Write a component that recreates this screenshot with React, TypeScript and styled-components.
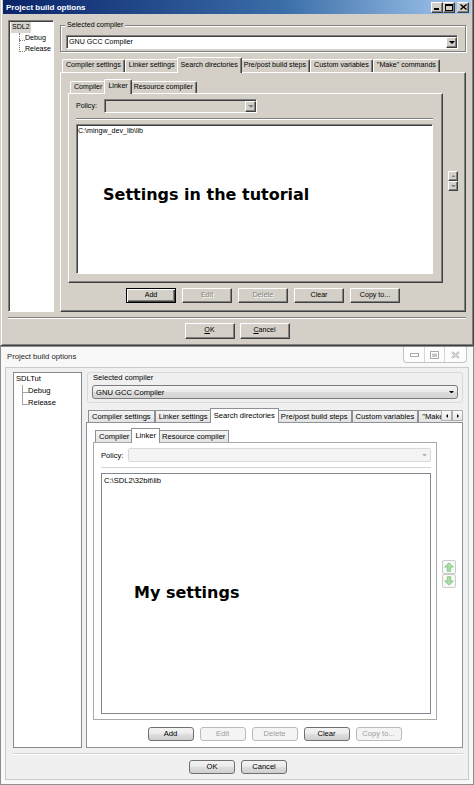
import styled, { createGlobalStyle, css, ThemeProvider } from "styled-components"
import type { DefaultTheme } from "styled-components"

declare module "styled-components" {
  export interface DefaultTheme {
    aero: boolean
  }
}

type Themed = { theme: DefaultTheme }

// picks the Win7 value or the classic one from the theme
const pick =
  <T,>(aero: T, classic: T) =>
  ({ theme }: Themed) =>
    theme.aero ? aero : classic

const raised = css`
  border: 1px solid;
  border-color: #ffffff #404040 #404040 #ffffff;
  box-shadow: inset -1px -1px #808080;
`

const sunken = css`
  border: 1px solid;
  border-color: #808080 #ffffff #ffffff #808080;
  box-shadow: inset 1px 1px #404040;
`

const GlobalStyle = createGlobalStyle`
  * {
    box-sizing: border-box;
  }
  html, body {
    margin: 0;
    padding: 0;
    background: #ffffff;
  }
  body {
    width: 474px;
    font-family: "Liberation Sans", Arial, sans-serif;
    color: #000000;
  }
`

const Dialog = styled.section`
  display: flex;
  flex-direction: column;
  ${pick(
    css`
      height: 439px;
      padding: 0 4px 4px;
      font-size: 7.6px;
      background: #f8f8f8;
      border: 1px solid #8d8d8d;
    `,
    css`
      height: 346px;
      padding: 0 2px 2px;
      font-size: 7.1px;
      background: #d4d0c8;
      border: 1px solid;
      border-color: #d4d0c8 #404040 #404040 #d4d0c8;
      border-top: 0;
      box-shadow: inset 1px 0 #ffffff, inset -1px -1px #808080;
    `
  )}
`

const Caption = styled.header`
  flex: none;
  display: flex;
  justify-content: space-between;
  ${pick(
    css`
      height: 20px;
      padding-left: 2px;
    `,
    css`
      height: 14px;
      align-items: center;
      padding: 0 2px 0 3px;
      background: linear-gradient(90deg, #0a246a, #3b6ea8 60%, #a6caf0);
    `
  )}
`

const CaptionText = styled.span`
  ${pick(
    css`
      font-size: 7.7px;
      line-height: 20px;
      color: #1e1e1e;
    `,
    css`
      font-size: 8px;
      font-weight: bold;
      color: #ffffff;
    `
  )}
`

const WindowControls = styled.div`
  display: flex;
  ${pick(
    css`
      height: 16px;
      margin-right: 2px;
      border: 1px solid #c4c4c4;
      border-top: 0;
      border-radius: 0 0 4px 4px;
      background: #fdfdfd;
    `,
    css`
      align-items: center;
    `
  )}
`

const WindowButton = styled.span<{ $wide?: boolean }>`
  display: flex;
  align-items: center;
  justify-content: center;
  ${({ theme, $wide }) =>
    theme.aero
      ? css`
          width: ${$wide ? 22 : 20}px;
          & + & {
            border-left: 1px solid #d6d6d6;
          }
        `
      : css`
          width: 12px;
          height: 11px;
          margin-left: ${$wide ? 2 : 0}px;
          background: #d4d0c8;
          ${raised}
        `}
`

const Body = styled.div`
  flex: 1;
  display: flex;
  flex-direction: column;
  ${pick(
    css`
      padding: 4px 5px 0 7px;
      background: #f0f0f0;
      border: 1px solid #cacaca;
    `,
    css`
      padding: 6px 5px 0 5px;
    `
  )}
`

const MainRow = styled.div`
  flex: none;
  display: flex;
  gap: ${pick(4, 6)}px;
  height: ${pick(376, 292)}px;
`

const Tree = styled.ul`
  flex: none;
  margin: 0;
  list-style: none;
  background: #ffffff;
  ${pick(
    css`
      width: 69px;
      padding: 0 0 0 1px;
      border: 1px solid #828790;
      line-height: 12px;
    `,
    css`
      width: 46px;
      padding: 1px 0 0 2px;
      ${sunken};
      line-height: 11px;
    `
  )}
`

const TreeNode = styled.li<{ $child?: boolean; $first?: boolean; $selected?: boolean }>`
  position: relative;
  width: fit-content;
  padding: 0 1px;
  white-space: nowrap;
  ${({ $selected }) =>
    $selected &&
    css`
      background: #d8d5cf;
    `}
  ${({ theme, $child, $first }) => {
    if (!$child) return ""
    const line = theme.aero ? "1px solid #a4a4a4" : "1px dotted #808080"
    const step = theme.aero ? 12 : 11
    return css`
      margin-left: ${theme.aero ? 12 : 13}px;
      &::before {
        content: "";
        position: absolute;
        left: -5px;
        top: ${$first ? 0 : -(step / 2)}px;
        width: 5px;
        height: ${$first ? Math.ceil(step / 2) + 1 : step + 1}px;
        border-left: ${line};
        border-bottom: ${line};
      }
    `
  }}
`

const RightCol = styled.div`
  flex: 1;
  min-width: 0;
  display: flex;
  flex-direction: column;
`

const GroupBox = styled.div`
  flex: none;
  ${pick(
    css`
      margin-left: 1px;
      padding: 0 4px 3px 4px;
      border: 1px solid #dadada;
      border-radius: 3px;
    `,
    css`
      margin-top: 5px;
      padding: 0 7px 2px 5px;
      border: 1px solid #808080;
      box-shadow: inset 1px 1px #ffffff, 1px 1px #ffffff;
    `
  )}
`

const GroupLabel = styled.span`
  display: block;
  width: fit-content;
  line-height: 10px;
  ${pick(
    css`
      padding-left: 1px;
    `,
    css`
      margin: -6px 0 0 -1px;
      padding: 0 2px;
      background: #d4d0c8;
    `
  )}
`

const Combo = styled.div<{ $disabled?: boolean; $width?: number; $grow?: boolean; $top?: number }>`
  display: flex;
  align-items: center;
  height: 14px;
  margin-top: ${({ $top }) => $top ?? 0}px;
  white-space: nowrap;
  ${({ $width }) =>
    $width &&
    css`
      flex: none;
      width: ${$width}px;
    `}
  ${({ $grow }) =>
    $grow &&
    css`
      flex: 1;
    `}
  ${({ theme, $disabled }) =>
    theme.aero
      ? $disabled
        ? css`
            border: 1px solid #d9d9d9;
            border-radius: 2px;
            background: #f4f4f4;
          `
        : css`
            padding-left: 3px;
            border: 1px solid #7a7a7a;
            border-radius: 3px;
            background: linear-gradient(#f5f5f5, #e9e9e9 50%, #dcdcdc 52%, #d3d3d3);
          `
      : css`
          padding-left: 2px;
          ${sunken};
          background: ${$disabled ? "#d4d0c8" : "#ffffff"};
        `}
`

const ComboText = styled.span`
  flex: 1;
  overflow: hidden;
`

const ComboArrow = styled.span`
  flex: none;
  display: flex;
  align-items: center;
  justify-content: center;
  ${pick(
    css`
      width: 11px;
      height: 100%;
    `,
    css`
      align-self: stretch;
      width: 11px;
      margin-top: 1px;
      background: #d4d0c8;
      ${raised}
    `
  )}
`

const TabStrip = styled.div<{ $inner?: boolean }>`
  position: relative;
  z-index: 1;
  flex: none;
  display: flex;
  align-items: flex-end;
  height: ${({ theme, $inner }) => (theme.aero || $inner ? 15 : 16)}px;
  margin-top: ${({ $inner }) => ($inner ? 0 : 5)}px;
  margin-bottom: -1px;
`

const TabList = styled.div`
  flex: 1;
  display: flex;
  align-items: flex-end;
  height: 100%;
  padding-left: 2px;
  overflow: hidden;
`

const Tab = styled.span<{ $active?: boolean; $inner?: boolean }>`
  position: relative;
  flex: none;
  display: flex;
  align-items: center;
  padding: 0 3px;
  white-space: nowrap;
  line-height: 1;
  ${({ theme, $active, $inner }) => {
    const full = theme.aero || $inner ? 15 : 16
    const rest = theme.aero || $inner ? 12 : 13
    return css`
      height: ${$active ? full : rest}px;
      margin: 0 ${$active ? -2 : 0}px ${$active ? 0 : 1}px;
      z-index: ${$active ? 1 : 0};
    `
  }}
  ${({ theme, $active }) =>
    theme.aero
      ? css`
          border: 1px solid #8e9097;
          border-bottom: 0;
          background: ${$active ? "#ffffff" : "linear-gradient(#f5f5f5, #e2e2e2)"};
        `
      : css`
          border: 1px solid;
          border-color: #ffffff #404040 transparent #ffffff;
          border-bottom: 0;
          border-radius: 2px 2px 0 0;
          background: #d4d0c8;
          box-shadow: inset -1px 0 #808080;
        `}
`

const TabScroll = styled.div`
  flex: none;
  display: flex;
  align-self: flex-end;
  margin-bottom: 2px;
`

const ScrollArrow = styled.span`
  display: flex;
  align-items: center;
  justify-content: center;
  width: 11px;
  height: 11px;
  border: 1px solid #adadad;
  background: linear-gradient(#fbfbfb, #e6e6e6);
`

const TabPanel = styled.div`
  flex: 1;
  min-height: 0;
  display: flex;
  flex-direction: column;
  ${pick(
    css`
      padding: 5px 6px 6px;
      background: #ffffff;
      border: 1px solid #8e9097;
    `,
    css`
      padding: 6px 7px 8px 7px;
      ${raised}
    `
  )}
`

const PanelRow = styled.div`
  flex: 1;
  min-height: 0;
  display: flex;
  align-items: center;
  gap: 5px;
`

const PageColumn = styled.div`
  flex: 1;
  align-self: stretch;
  display: flex;
  flex-direction: column;
`

const InnerPanel = styled.div`
  flex: 1;
  min-height: 0;
  display: flex;
  flex-direction: column;
  ${pick(
    css`
      padding: 5px 5px 5px 7px;
      background: #ffffff;
      border: 1px solid #a9a9a9;
    `,
    css`
      padding: 5px 9px 8px 7px;
      ${raised}
    `
  )}
`

const FieldRow = styled.div`
  flex: none;
  display: flex;
  align-items: center;
  height: 14px;
`

const FieldLabel = styled.span`
  flex: none;
  width: ${pick(27, 28)}px;
`

const Rule = styled.div<{ $gap: number }>`
  flex: none;
  height: 2px;
  margin-top: ${({ $gap }) => $gap}px;
  border-top: 1px solid ${pick("#d5d5d5", "#808080")};
  border-bottom: 1px solid #ffffff;
`

const ListBox = styled.div`
  flex: 1;
  min-height: 0;
  margin-top: 4px;
  background: #ffffff;
  white-space: nowrap;
  ${pick(
    css`
      padding: 1px 2px;
      border: 1px solid #828790;
      line-height: 11px;
    `,
    css`
      padding: 1px 0 0 1px;
      ${sunken};
      line-height: 10px;
    `
  )}
`

const Note = styled.div`
  font-family: "DejaVu Sans", Verdana, sans-serif;
  font-weight: bold;
  font-size: 16px;
  line-height: 16px;
  margin: ${pick("99px 0 0 30px", "51px 0 0 25px")};
`

const SpinColumn = styled.div`
  flex: none;
  display: flex;
  flex-direction: column;
`

const SpinButton = styled.span`
  display: flex;
  align-items: center;
  justify-content: center;
  ${pick(
    css`
      width: 14px;
      height: 14px;
      border: 1px solid #cbcbcb;
      border-radius: 2px;
      background: #f9f9f9;
    `,
    css`
      width: 10px;
      height: 10px;
      background: #d4d0c8;
      ${raised}
    `
  )}
`

const ButtonRow = styled.div<{ $gap: number; $top: number }>`
  flex: none;
  display: flex;
  justify-content: center;
  gap: ${({ $gap }) => $gap}px;
  margin-top: ${({ $top }) => $top}px;
`

const PushButton = styled.button<{ $default?: boolean; $tall?: boolean }>`
  flex: none;
  margin: 0;
  padding: 0;
  font: inherit;
  line-height: 1;
  ${({ theme, $default, $tall, disabled }) =>
    theme.aero
      ? css`
          width: 46px;
          height: 14px;
          border: 1px solid ${disabled ? "#b8bcbf" : "#707070"};
          border-radius: 3px;
          background: ${disabled ? "#f4f4f4" : "linear-gradient(#f3f3f3, #ebebeb 45%, #dddddd 55%, #cfcfcf)"};
          color: ${disabled ? "#9c9c9c" : "#000000"};
        `
      : css`
          width: 50px;
          height: ${$tall ? 16 : 15}px;
          background: #d4d0c8;
          color: ${disabled ? "#808080" : "#000000"};
          text-shadow: ${disabled ? "1px 1px #ffffff" : "none"};
          ${$default
            ? css`
                border: 1px solid #000000;
                box-shadow: inset 1px 1px #ffffff, inset -1px -1px #404040, inset -2px -2px #808080;
              `
            : raised}
        `}
`

type Dir = "up" | "down" | "left" | "right"

const Caret = ({ dir, color, size = 3 }: { dir: Dir; color: string; size?: number }) => {
  const flat = dir === "up" || dir === "down"
  const w = flat ? size * 2 : size
  const h = flat ? size : size * 2
  const points = {
    down: `0,0 ${w},0 ${w / 2},${h}`,
    up: `0,${h} ${w},${h} ${w / 2},0`,
    left: `${w},0 ${w},${h} 0,${h / 2}`,
    right: `0,0 0,${h} ${w},${h / 2}`,
  }[dir]
  return (
    <svg width={w} height={h} viewBox={`0 0 ${w} ${h}`}>
      <polygon points={points} fill={color} />
    </svg>
  )
}

const GreenArrow = ({ down }: { down?: boolean }) => (
  <svg width="10" height="10" viewBox="0 0 10 10">
    <polygon
      points="5,0.8 9.4,5 6.7,5 6.7,9.3 3.3,9.3 3.3,5 0.6,5"
      fill="#a9dca9"
      stroke="#7cc27c"
      strokeWidth="0.8"
      transform={down ? "rotate(180 5 5)" : undefined}
    />
  </svg>
)

const MinGlyph = ({ aero }: { aero: boolean }) =>
  aero ? (
    <svg width="9" height="4" viewBox="0 0 9 4">
      <rect x="0.5" y="0.5" width="8" height="3" fill="#ffffff" stroke="#a9a9a9" />
    </svg>
  ) : (
    <svg width="6" height="6" viewBox="0 0 6 6">
      <rect x="0" y="4" width="5" height="2" fill="#000000" />
    </svg>
  )

const MaxGlyph = ({ aero }: { aero: boolean }) =>
  aero ? (
    <svg width="9" height="8" viewBox="0 0 9 8">
      <rect x="0.5" y="0.5" width="8" height="7" fill="#ffffff" stroke="#a9a9a9" />
      <rect x="2" y="2.5" width="5" height="3.5" fill="#c4c4c4" />
    </svg>
  ) : (
    <svg width="8" height="7" viewBox="0 0 8 7">
      <rect x="0.5" y="0.5" width="7" height="6" fill="none" stroke="#000000" />
      <rect x="0" y="0" width="8" height="2" fill="#000000" />
    </svg>
  )

const CloseGlyph = ({ aero }: { aero: boolean }) =>
  aero ? (
    <svg width="9" height="8" viewBox="0 0 9 8">
      <path d="M1 1 L8 7 M8 1 L1 7" stroke="#b2b2b2" strokeWidth="2.2" />
      <path d="M1 1 L8 7 M8 1 L1 7" stroke="#ffffff" strokeWidth="0.6" />
    </svg>
  ) : (
    <svg width="7" height="6" viewBox="0 0 7 6">
      <path d="M0.5 0.5 L6.5 5.5 M6.5 0.5 L0.5 5.5" stroke="#000000" strokeWidth="1.4" />
    </svg>
  )

const compilerTabs = [
  "Compiler settings",
  "Linker settings",
  "Search directories",
  "Pre/post build steps",
  "Custom variables",
  '"Make" commands',
]

const pageTabs = ["Compiler", "Linker", "Resource compiler"]

const listButtons = [
  { label: "Add", enabled: true },
  { label: "Edit", enabled: false },
  { label: "Delete", enabled: false },
  { label: "Clear", enabled: true },
  { label: "Copy to...", enabled: false },
]

type Shot = {
  aero: boolean
  target: string
  path: string
  note: string
  copyEnabled: boolean
}

const shots: Shot[] = [
  { aero: false, target: "SDL2", path: "C:\\mingw_dev_lib\\lib", note: "Settings in the tutorial", copyEnabled: true },
  { aero: true, target: "SDLTut", path: "C:\\SDL2\\32bit\\lib", note: "My settings", copyEnabled: false },
]

const BuildOptions = ({ shot }: { shot: Shot }) => {
  const { aero } = shot
  const mutedArrow = aero ? "#b0b0b0" : "#808080"
  return (
    <ThemeProvider theme={{ aero }}>
      <Dialog>
        <Caption>
          <CaptionText>Project build options</CaptionText>
          <WindowControls>
            <WindowButton>
              <MinGlyph aero={aero} />
            </WindowButton>
            <WindowButton>
              <MaxGlyph aero={aero} />
            </WindowButton>
            <WindowButton $wide>
              <CloseGlyph aero={aero} />
            </WindowButton>
          </WindowControls>
        </Caption>

        <Body>
          <MainRow>
            <Tree>
              <TreeNode $selected={!aero}>{shot.target}</TreeNode>
              <TreeNode $child $first>
                Debug
              </TreeNode>
              <TreeNode $child>Release</TreeNode>
            </Tree>

            <RightCol>
              <GroupBox>
                <GroupLabel>Selected compiler</GroupLabel>
                <Combo $top={aero ? 2 : 5}>
                  <ComboText>GNU GCC Compiler</ComboText>
                  <ComboArrow>
                    <Caret dir="down" color="#000000" size={aero ? 2.5 : 3} />
                  </ComboArrow>
                </Combo>
              </GroupBox>

              <TabStrip>
                <TabList>
                  {compilerTabs.map((t, i) => (
                    <Tab key={t} $active={i === 2}>
                      {t}
                    </Tab>
                  ))}
                </TabList>
                {aero && (
                  <TabScroll>
                    <ScrollArrow>
                      <Caret dir="left" color="#000000" size={2} />
                    </ScrollArrow>
                    <ScrollArrow>
                      <Caret dir="right" color="#000000" size={2} />
                    </ScrollArrow>
                  </TabScroll>
                )}
              </TabStrip>

              <TabPanel>
                <PanelRow>
                  <PageColumn>
                    <TabStrip $inner>
                      <TabList>
                        {pageTabs.map((t, i) => (
                          <Tab key={t} $inner $active={i === 1}>
                            {t}
                          </Tab>
                        ))}
                      </TabList>
                    </TabStrip>
                    <InnerPanel>
                      <FieldRow>
                        <FieldLabel>Policy:</FieldLabel>
                        <Combo $disabled $width={aero ? undefined : 153} $grow={aero}>
                          <ComboText />
                          <ComboArrow>
                            <Caret dir="down" color={mutedArrow} size={aero ? 2.5 : 3} />
                          </ComboArrow>
                        </Combo>
                      </FieldRow>
                      <Rule $gap={5} />
                      <ListBox>
                        <div>{shot.path}</div>
                        <Note>{shot.note}</Note>
                      </ListBox>
                    </InnerPanel>
                  </PageColumn>

                  <SpinColumn>
                    <SpinButton>{aero ? <GreenArrow /> : <Caret dir="up" color="#808080" size={2.5} />}</SpinButton>
                    <SpinButton>
                      {aero ? <GreenArrow down /> : <Caret dir="down" color="#808080" size={2.5} />}
                    </SpinButton>
                  </SpinColumn>
                </PanelRow>

                <ButtonRow $gap={6} $top={aero ? 7 : 5}>
                  {listButtons.map((b) => {
                    const enabled = b.label === "Copy to..." ? shot.copyEnabled : b.enabled
                    return (
                      <PushButton key={b.label} disabled={!enabled} $default={b.label === "Add"}>
                        {b.label}
                      </PushButton>
                    )
                  })}
                </ButtonRow>
              </TabPanel>
            </RightCol>
          </MainRow>

          <Rule $gap={5} />
          <ButtonRow $gap={aero ? 6 : 5} $top={aero ? 5 : 4}>
            <PushButton $tall>{aero ? "OK" : <><u>O</u>K</>}</PushButton>
            <PushButton $tall>{aero ? "Cancel" : <><u>C</u>ancel</>}</PushButton>
          </ButtonRow>
        </Body>
      </Dialog>
    </ThemeProvider>
  )
}

const App = () => {
  return (
    <>
      <GlobalStyle />
      {shots.map((s) => (
        <BuildOptions key={s.target} shot={s} />
      ))}
    </>
  )
}

export default App
